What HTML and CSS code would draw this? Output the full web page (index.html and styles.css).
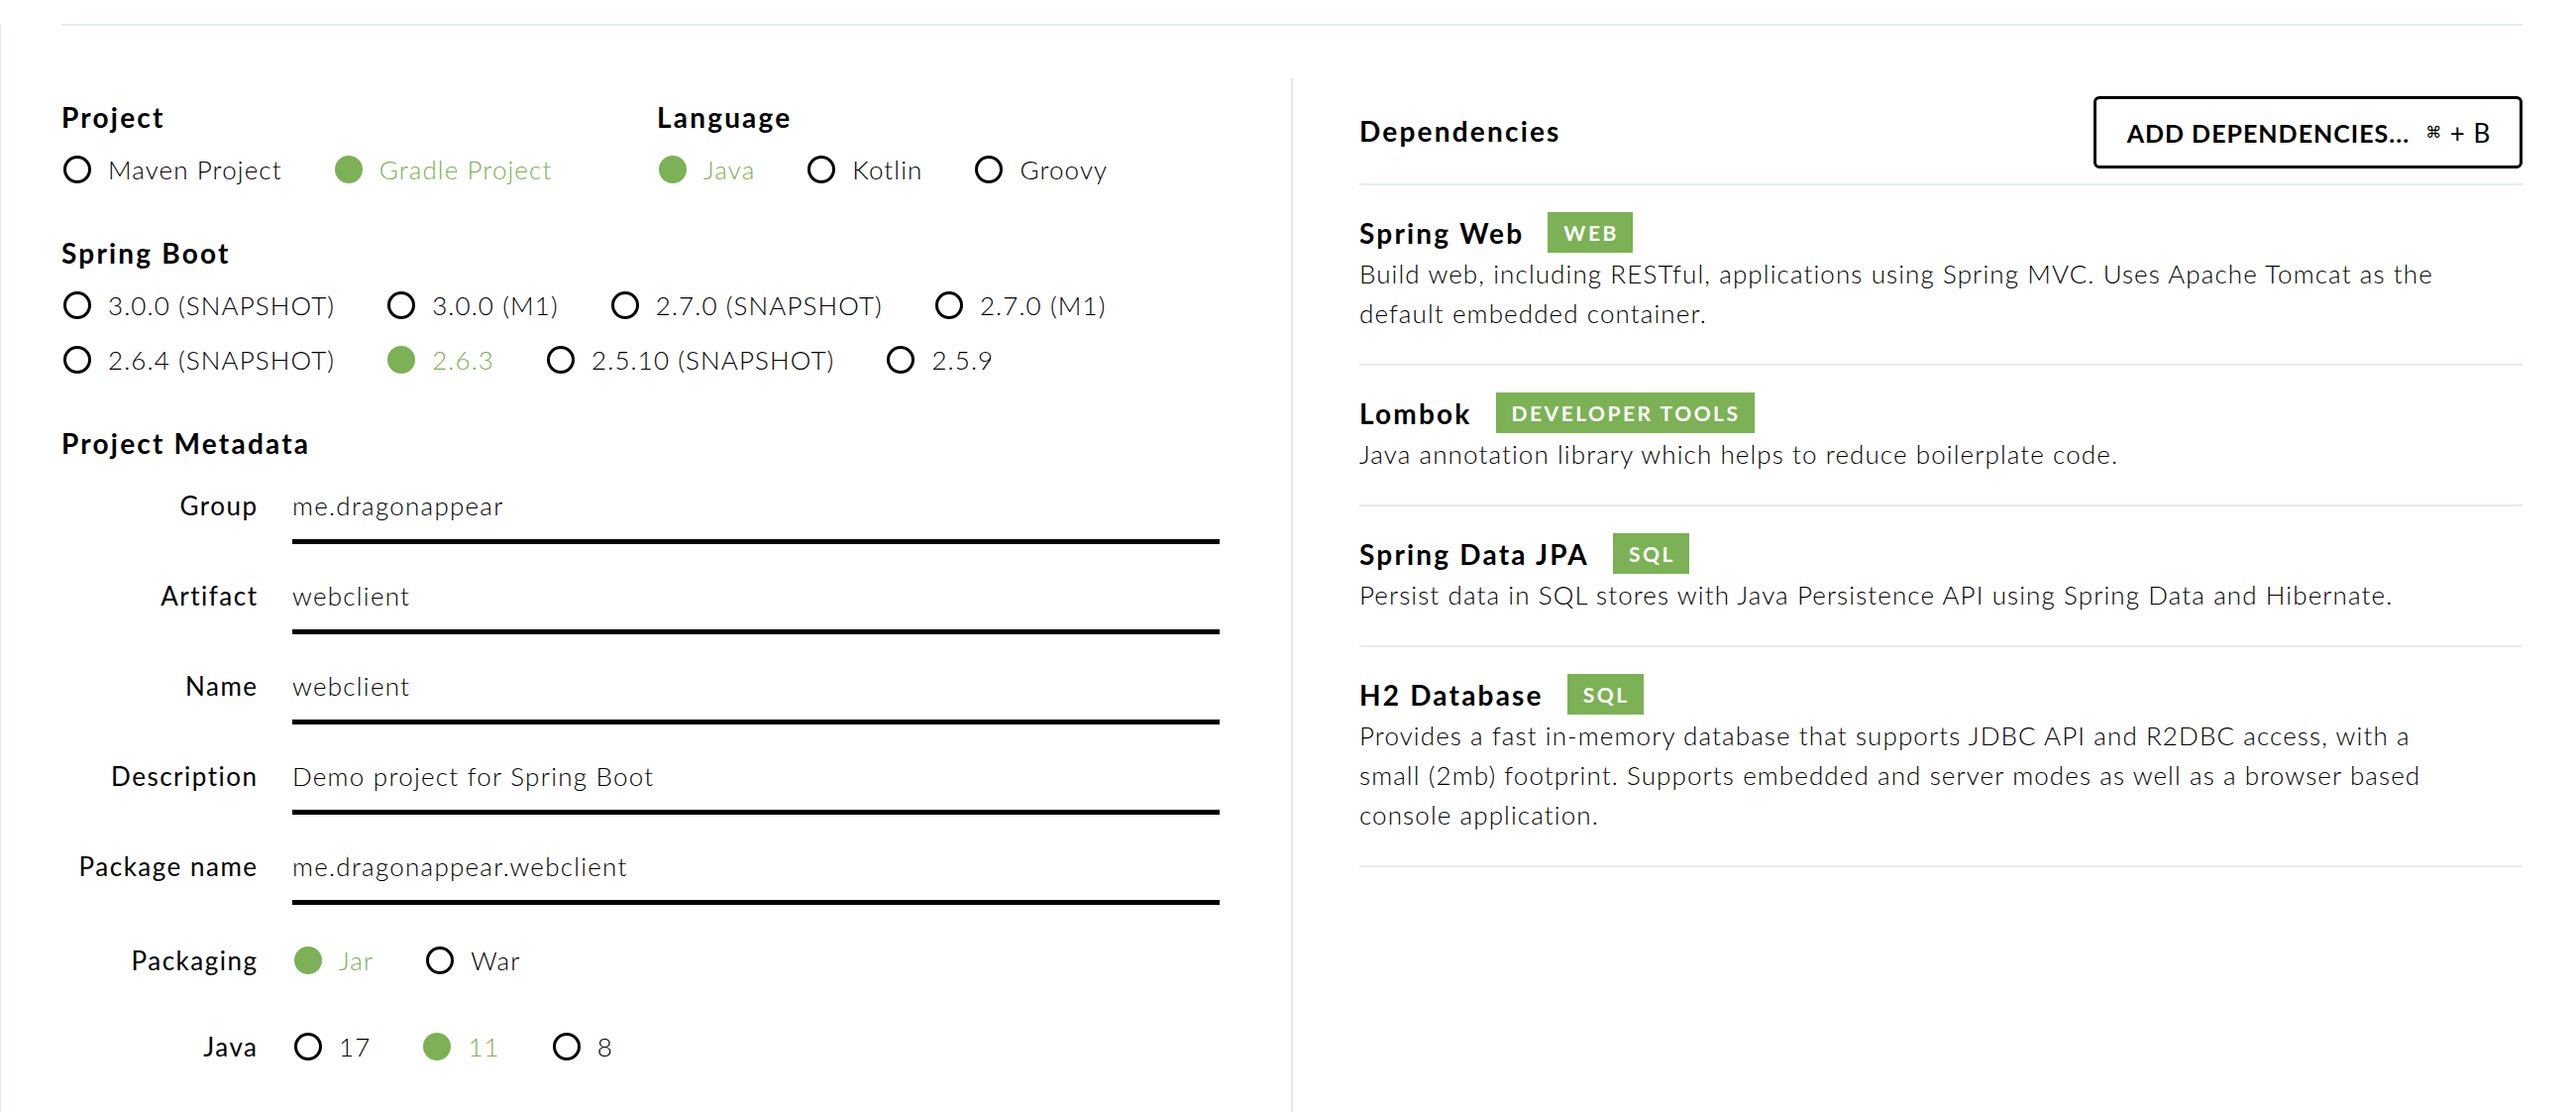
FILE: index.html
```html
<!DOCTYPE html>
<html lang="en">
<head>
<meta charset="utf-8">
<title>Spring Initializr</title>
<link rel="stylesheet" href="styles.css">
</head>
<body>
<div class="page">
  <div class="topline"></div>
  <div class="main">
    <div class="left">
      <div class="row-top">
        <section class="group project">
          <h2 class="heading">Project</h2>
          <div class="radios">
            <div class="radio"><span class="dot"></span><span>Maven Project</span></div>
            <div class="radio on"><span class="dot"></span><span>Gradle Project</span></div>
          </div>
        </section>
        <section class="group">
          <h2 class="heading">Language</h2>
          <div class="radios">
            <div class="radio on"><span class="dot"></span><span>Java</span></div>
            <div class="radio"><span class="dot"></span><span>Kotlin</span></div>
            <div class="radio"><span class="dot"></span><span>Groovy</span></div>
          </div>
        </section>
      </div>
      <section class="group section">
        <h2 class="heading">Spring Boot</h2>
        <div class="radios">
          <div class="radio"><span class="dot"></span><span>3.0.0 (SNAPSHOT)</span></div>
          <div class="radio"><span class="dot"></span><span>3.0.0 (M1)</span></div>
          <div class="radio"><span class="dot"></span><span>2.7.0 (SNAPSHOT)</span></div>
          <div class="radio"><span class="dot"></span><span>2.7.0 (M1)</span></div>
        </div>
        <div class="radios">
          <div class="radio"><span class="dot"></span><span>2.6.4 (SNAPSHOT)</span></div>
          <div class="radio on"><span class="dot"></span><span>2.6.3</span></div>
          <div class="radio"><span class="dot"></span><span>2.5.10 (SNAPSHOT)</span></div>
          <div class="radio"><span class="dot"></span><span>2.5.9</span></div>
        </div>
      </section>
      <section class="group section meta">
        <h2 class="heading">Project Metadata</h2>
        <div class="field"><div class="label">Group</div><div class="input">me.dragonappear</div></div>
        <div class="field"><div class="label">Artifact</div><div class="input">webclient</div></div>
        <div class="field"><div class="label">Name</div><div class="input">webclient</div></div>
        <div class="field"><div class="label">Description</div><div class="input">Demo project for Spring Boot</div></div>
        <div class="field"><div class="label">Package name</div><div class="input">me.dragonappear.webclient</div></div>
        <div class="field radio-field">
          <div class="label">Packaging</div>
          <div class="radios inline">
            <div class="radio on"><span class="dot"></span><span>Jar</span></div>
            <div class="radio"><span class="dot"></span><span>War</span></div>
          </div>
        </div>
        <div class="field radio-field">
          <div class="label">Java</div>
          <div class="radios inline">
            <div class="radio"><span class="dot"></span><span>17</span></div>
            <div class="radio on"><span class="dot"></span><span>11</span></div>
            <div class="radio"><span class="dot"></span><span>8</span></div>
          </div>
        </div>
      </section>
    </div>
    <div class="right">
      <div class="dep-header">
        <h2 class="heading dep-heading">Dependencies</h2>
        <button class="add-btn" type="button">ADD DEPENDENCIES...<span class="kbd"><span class="cmd">⌘</span> + B</span></button>
      </div>
      <div class="dep">
        <div class="dep-title"><span>Spring Web</span><span class="badge">Web</span></div>
        <div class="dep-desc">Build web, including RESTful, applications using Spring MVC. Uses Apache Tomcat as the<br>default embedded container.</div>
      </div>
      <div class="dep">
        <div class="dep-title"><span>Lombok</span><span class="badge">Developer Tools</span></div>
        <div class="dep-desc">Java annotation library which helps to reduce boilerplate code.</div>
      </div>
      <div class="dep">
        <div class="dep-title"><span>Spring Data JPA</span><span class="badge">SQL</span></div>
        <div class="dep-desc">Persist data in SQL stores with Java Persistence API using Spring Data and Hibernate.</div>
      </div>
      <div class="dep">
        <div class="dep-title"><span>H2 Database</span><span class="badge">SQL</span></div>
        <div class="dep-desc">Provides a fast in-memory database that supports JDBC API and R2DBC access, with a<br>small (2mb) footprint. Supports embedded and server modes as well as a browser based<br>console application.</div>
      </div>
    </div>
  </div>
</div>
</body>
</html>
```

FILE: styles.css
```css
* { box-sizing: border-box; }

html, body {
  margin: 0;
  padding: 0;
  background: #ffffff;
}

body {
  font-family: Lato, "Liberation Sans", sans-serif;
  color: #000;
  overflow: hidden;
}

.page {
  min-height: 1122px;
  border-left: 1px solid #e3e9ea;
  padding: 0 54px 0 61px;
}

.topline {
  margin-top: 24px;
  border-top: 2px solid #e6ecec;
}

.main {
  display: flex;
  margin-top: 53px;
  min-height: 1043px;
}

.left {
  flex: none;
  width: 1241px;
  padding-top: 21px;
}

.right {
  flex: 1;
  border-left: 2px solid #e3e9ea;
  padding-left: 67px;
}

.heading {
  margin: 0;
  font-size: 28px;
  line-height: 36px;
  font-weight: 700;
  letter-spacing: 2.2px;
}

.row-top {
  display: flex;
}

.project {
  width: 601px;
}

.section {
  margin-top: 46px;
}

.radios {
  display: flex;
  gap: 51px;
  margin-top: 15px;
  height: 40px;
}

.radios.inline {
  margin-top: 0;
}

.radio {
  display: flex;
  align-items: center;
  gap: 17px;
  font-size: 26px;
  line-height: 40px;
  font-weight: 300;
  letter-spacing: 1.1px;
  white-space: nowrap;
}

.dot {
  width: 28px;
  height: 28px;
  margin-left: 2px;
  border: 3px solid #000;
  border-radius: 50%;
  flex: none;
}

.radio.on {
  color: #7cb155;
}

.radio.on .dot {
  background: #7cb155;
  border-color: #7cb155;
}

.meta .heading {
  margin-bottom: 25px;
}

.field {
  display: flex;
  align-items: flex-start;
  margin-bottom: 32px;
}

.label {
  width: 198.5px;
  margin-right: 34.5px;
  text-align: right;
  font-size: 26px;
  line-height: 40px;
  font-weight: 400;
  letter-spacing: 1.5px;
  white-space: nowrap;
}

.input {
  width: 936px;
  font-size: 26px;
  line-height: 40px;
  font-weight: 300;
  letter-spacing: 1.25px;
  padding-bottom: 14px;
  border-bottom: 5px solid #000;
}

.radio-field {
  align-items: center;
  height: 40px;
  margin-top: 36px;
  margin-bottom: 47px;
}

.dep-header {
  display: flex;
  justify-content: space-between;
  align-items: center;
  padding: 18px 0 15px;
  border-bottom: 2px solid #e6ecec;
}

.dep-heading {
  margin-bottom: 4px;
}

.add-btn {
  display: flex;
  align-items: center;
  justify-content: center;
  width: 433px;
  height: 73px;
  padding: 0 0 0 2px;
  border: 3px solid #000;
  border-radius: 6px;
  background: #fff;
  color: #000;
  font-family: Lato, "Liberation Sans", sans-serif;
  font-size: 25px;
  font-weight: 700;
  letter-spacing: 1px;
  white-space: nowrap;
}

.kbd {
  margin-left: 16px;
  font-size: 26px;
  font-weight: 400;
  letter-spacing: 1px;
}

.cmd {
  font-family: "DejaVu Sans", sans-serif;
  font-size: 16px;
  vertical-align: 5px;
}

.dep {
  padding: 27px 0 31px;
  border-bottom: 2px solid #e6ecec;
}

.dep-title {
  display: flex;
  align-items: center;
  gap: 24px;
  height: 41px;
  font-size: 28px;
  font-weight: 700;
  letter-spacing: 2.2px;
  white-space: nowrap;
}

.badge {
  height: 41px;
  line-height: 41px;
  padding: 0 14px 0 16px;
  background: #7cb155;
  color: #fff;
  font-size: 21px;
  font-weight: 700;
  letter-spacing: 2.5px;
  text-transform: uppercase;
}

.dep-desc {
  margin-top: 1px;
  font-size: 26px;
  line-height: 40px;
  font-weight: 300;
  letter-spacing: 1.1px;
  color: #000;
  white-space: nowrap;
}
```
